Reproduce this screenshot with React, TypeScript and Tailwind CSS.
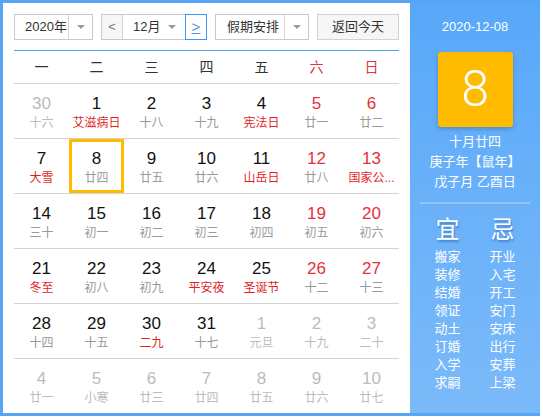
import React from "react";

type Day = { n: number; l: string; out?: boolean; hot?: boolean; sel?: boolean };

const weekNames = ["一", "二", "三", "四", "五", "六", "日"];

const rows: Day[][] = [
  [
    { n: 30, l: "十六", out: true },
    { n: 1, l: "艾滋病日", hot: true },
    { n: 2, l: "十八" },
    { n: 3, l: "十九" },
    { n: 4, l: "宪法日", hot: true },
    { n: 5, l: "廿一" },
    { n: 6, l: "廿二" },
  ],
  [
    { n: 7, l: "大雪", hot: true },
    { n: 8, l: "廿四", sel: true },
    { n: 9, l: "廿五" },
    { n: 10, l: "廿六" },
    { n: 11, l: "山岳日", hot: true },
    { n: 12, l: "廿八" },
    { n: 13, l: "国家公...", hot: true },
  ],
  [
    { n: 14, l: "三十" },
    { n: 15, l: "初一" },
    { n: 16, l: "初二" },
    { n: 17, l: "初三" },
    { n: 18, l: "初四" },
    { n: 19, l: "初五" },
    { n: 20, l: "初六" },
  ],
  [
    { n: 21, l: "冬至", hot: true },
    { n: 22, l: "初八" },
    { n: 23, l: "初九" },
    { n: 24, l: "平安夜", hot: true },
    { n: 25, l: "圣诞节", hot: true },
    { n: 26, l: "十二" },
    { n: 27, l: "十三" },
  ],
  [
    { n: 28, l: "十四" },
    { n: 29, l: "十五" },
    { n: 30, l: "二九", hot: true },
    { n: 31, l: "十七" },
    { n: 1, l: "元旦", out: true },
    { n: 2, l: "十九", out: true },
    { n: 3, l: "二十", out: true },
  ],
  [
    { n: 4, l: "廿一", out: true },
    { n: 5, l: "小寒", out: true },
    { n: 6, l: "廿三", out: true },
    { n: 7, l: "廿四", out: true },
    { n: 8, l: "廿五", out: true },
    { n: 9, l: "廿六", out: true },
    { n: 10, l: "廿七", out: true },
  ],
];

const yi = ["搬家", "装修", "结婚", "领证", "动土", "订婚", "入学", "求嗣"];
const ji = ["开业", "入宅", "开工", "安门", "安床", "出行", "安葬", "上梁"];

const Caret = () => (
  <span className="h-0 w-0 border-x-[4px] border-t-[4px] border-x-transparent border-t-[#999]" />
);

const DayCell = ({ day, col }: { day: Day; col: number }) => {
  const weekend = col >= 5;
  const numColor = day.out ? "text-[#bbb]" : weekend ? "text-[#e3323a]" : "text-[#111]";
  const lunarColor = day.out ? "text-[#bbb]" : day.hot ? "text-[#e21f1f]" : "text-[#999]";

  return (
    <div
      className={`flex flex-col items-center pt-[10px] ${
        day.sel ? "shadow-[inset_0_0_0_3px_#ffbb00]" : ""
      }`}
    >
      <span className={`text-[17px] leading-[20px] ${numColor}`}>{day.n}</span>
      <span className={`whitespace-nowrap text-[12px] leading-[18px] ${lunarColor}`}>
        {day.l}
      </span>
    </div>
  );
};

const App = () => {
  return (
    <div className="font-['Liberation_Sans','Noto_Sans_CJK_SC',sans-serif]">
      <div className="flex h-[416px] w-[540px] border-[3px] border-r-0 border-[#57a6f5] bg-white">
        {/* calendar */}
        <div className="flex w-[407px] flex-col px-[11px]">
          <div className="flex gap-2 border-b border-[#4ea3f5] pt-[11px] pb-[10px] text-[13px] text-[#333]">
            <div className="flex h-[26px] w-[79px] border border-[#c9c9c9]">
              <span className="flex flex-1 items-center whitespace-nowrap pl-[10px]">2020年</span>
              <span className="flex w-[24px] items-center justify-center border-l border-[#d6d6d6]">
                <Caret />
              </span>
            </div>
            <div className="flex h-[26px] w-[106px] border border-[#c9c9c9]">
              <span className="flex w-[21px] items-center justify-center border-r border-[#d6d6d6] bg-[#f6f6f6] text-[#777]">
                &lt;
              </span>
              <span className="flex flex-1 items-center justify-between pl-[10px] pr-[9px]">
                12月
                <Caret />
              </span>
              <span className="-my-px -mr-px flex h-[26px] w-[22px] items-center justify-center border border-[#3f97f3] text-[15px] text-[#3f97f3] underline">
                &gt;
              </span>
            </div>
            <div className="flex h-[26px] w-[94px] border border-[#c9c9c9]">
              <span className="flex flex-1 items-center whitespace-nowrap pl-[11px]">假期安排</span>
              <span className="flex w-[24px] items-center justify-center border-l border-[#d6d6d6]">
                <Caret />
              </span>
            </div>
            <button className="flex h-[26px] w-[82px] items-center justify-center border border-[#d2d2d2] bg-[#f6f6f6]">
              返回今天
            </button>
          </div>

          <div className="grid h-[33px] grid-cols-7 items-center border-b border-[#d4d4d4] text-center text-[14px]">
            {weekNames.map((w, i) => (
              <span key={w} className={i >= 5 ? "text-[#e3323a]" : "text-[#333]"}>
                {w}
              </span>
            ))}
          </div>

          {rows.map((row, r) => (
            <div
              key={r}
              className={`grid grid-cols-7 ${
                r < rows.length - 1 ? "h-[55px] border-b border-[#d4d4d4]" : "h-[53px]"
              }`}
            >
              {row.map((day, c) => (
                <DayCell key={c} day={day} col={c} />
              ))}
            </div>
          ))}
        </div>

        {/* side panel */}
        <div className="flex w-[130px] flex-col items-center bg-linear-to-b from-[#58a8f9] to-[#7bbaf9] pt-[14px] text-white">
          <div className="text-[13px] leading-[20px]">2020-12-08</div>
          <div className="mt-[15px] flex h-[75px] w-[75px] items-center justify-center rounded-[3px] bg-[#ffbb00] font-['Roboto','Liberation_Sans',sans-serif] text-[50px] font-light shadow-[0_2px_4px_rgba(0,0,0,0.2)]">
            8
          </div>
          <div className="mt-[5px] text-center text-[13px] leading-[20px]">
            <div>十月廿四</div>
            <div>庚子年【鼠年】</div>
            <div>戊子月 乙酉日</div>
          </div>
          <div className="mt-[10px] h-[2px] w-[110px] bg-[#8fc6fb]" />
          <div className="mt-[12px] grid w-[110px] grid-cols-2">
            {[
              { t: "宜", list: yi },
              { t: "忌", list: ji },
            ].map((g) => (
              <div key={g.t} className="flex flex-col items-center">
                <span className="text-[24px] leading-[28px] [text-shadow:1px_2px_2px_rgba(0,40,120,0.35)]">
                  {g.t}
                </span>
                <div className="mt-[4px] flex flex-col items-center text-[13px] leading-[18px]">
                  {g.list.map((x) => (
                    <span key={x}>{x}</span>
                  ))}
                </div>
              </div>
            ))}
          </div>
        </div>
      </div>
    </div>
  );
};

export default App;
